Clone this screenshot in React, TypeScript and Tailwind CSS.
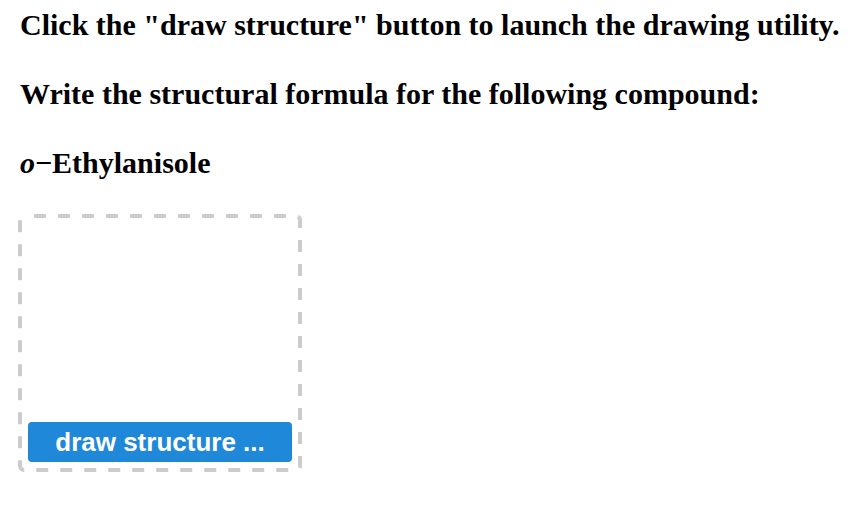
export default function App() {
  return (
    <div className="min-h-screen bg-white pl-[20px] pt-[8px] text-black" style={{ fontFamily: '"Liberation Serif", "Times New Roman", serif' }}>
      <p className="text-[30px] leading-[34px] font-bold">Click the "draw structure" button to launch the drawing utility.</p>
      <p className="mt-[35px] text-[30px] leading-[34px] font-bold">Write the structural formula for the following compound:</p>
      <p className="mt-[35px] text-[30px] leading-[34px] font-bold">
        <i>o</i>−Ethylanisole
      </p>
      {/* drawing area with dashed outline */}
      <div className="relative -ml-[2px] mt-[34px] flex h-[258px] w-[284px] flex-col justify-end px-[10px] pb-[10px]">
        <svg className="pointer-events-none absolute inset-0" width="284" height="258" viewBox="0 0 284 258">
          <rect
            x="2"
            y="2"
            width="280"
            height="254"
            rx="4"
            fill="none"
            stroke="#cccccc"
            strokeWidth="4"
            strokeDasharray="12 12"
            strokeDashoffset="14"
          />
        </svg>
        <button
          className="relative h-[40px] w-full rounded-[4px] bg-[#1f88d8] text-[26px] leading-[30px] font-bold text-white"
          style={{ fontFamily: '"Liberation Sans", Arial, sans-serif' }}
        >
          draw structure ...
        </button>
      </div>
    </div>
  );
}
